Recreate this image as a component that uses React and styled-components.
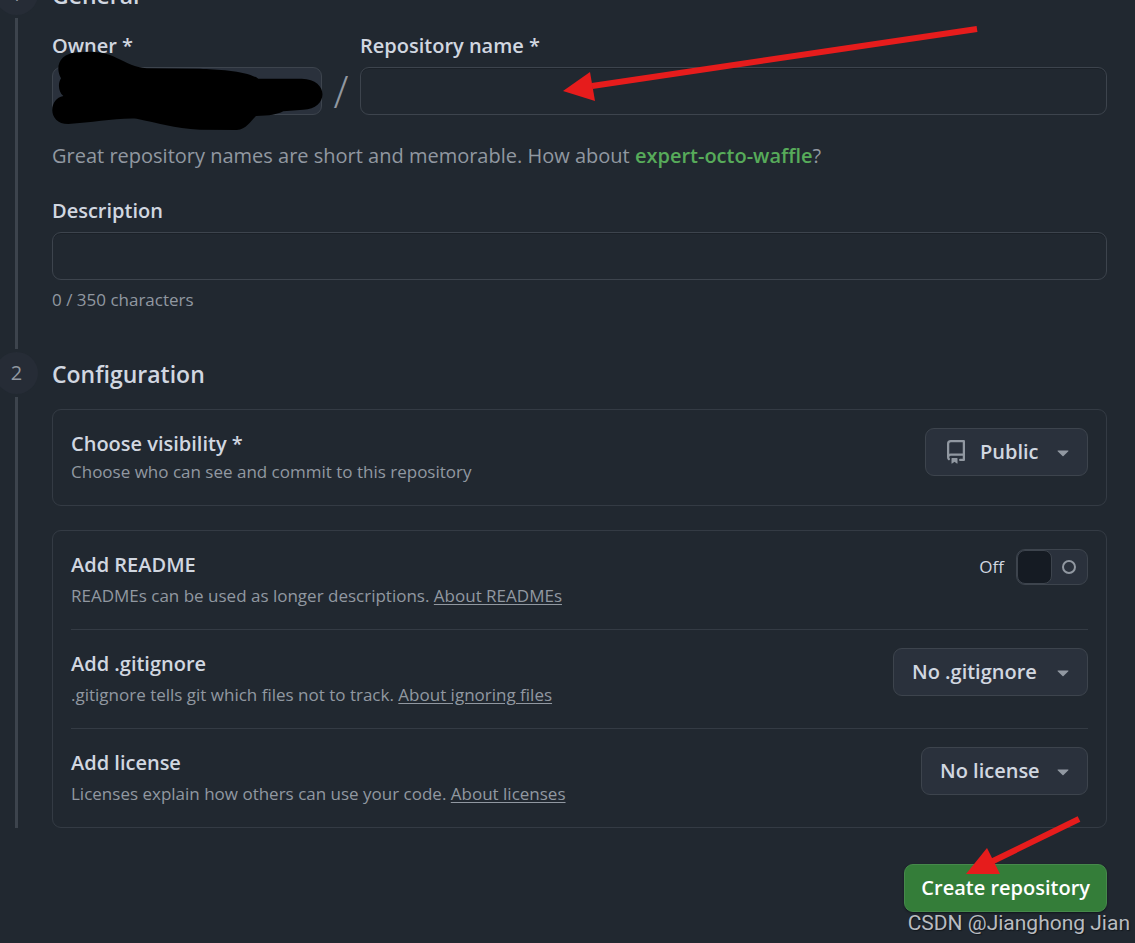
import React, { useState } from 'react';
import styled, { createGlobalStyle } from 'styled-components';

const gitignores = ['No .gitignore', 'Node', 'Python'];
const licenses = ['No license', 'MIT License', 'Apache License 2.0'];

const RepoIcon = () => (
    <Icon viewBox="0 0 16 16" aria-hidden="true">
        <path d="M2 2.5A2.5 2.5 0 0 1 4.5 0h8.75a.75.75 0 0 1 .75.75v12.5a.75.75 0 0 1-.75.75h-2.5a.75.75 0 0 1 0-1.5h1.75v-2h-8a1 1 0 0 0-.714 1.7.75.75 0 1 1-1.072 1.05A2.495 2.495 0 0 1 2 11.5Zm10.5-1h-8a1 1 0 0 0-1 1v6.708A2.486 2.486 0 0 1 4.5 9h8ZM5 12.25a.25.25 0 0 1 .25-.25h3.5a.25.25 0 0 1 .25.25v3.25a.25.25 0 0 1-.4.2l-1.45-1.087a.249.249 0 0 0-.3 0L5.4 15.7a.25.25 0 0 1-.4-.2Z" />
    </Icon>
)

const CaretIcon = () => (
    <Icon viewBox="0 0 16 16" aria-hidden="true">
        <path d="m4.427 7.427 3.396 3.396a.25.25 0 0 0 .354 0l3.396-3.396A.25.25 0 0 0 11.396 7H4.604a.25.25 0 0 0-.177.427Z" />
    </Icon>
)

const Dropdown = ({ label, options, icon, width }) => {
    const [value, setValue] = useState(options[0])
    return <Picker $width={width}>
        {icon}
        <PickerSelect aria-label={label} value={value} onChange={e => setValue(e.target.value)}>
            {options.map(item => <option key={item}>{item}</option>)}
        </PickerSelect>
        <CaretIcon />
    </Picker>
}

const Setting = ({ title, text, link, gap, children }) => (
    <Row>
        <RowText $gap={gap}>
            <RowTitle>{title}</RowTitle>
            <Muted>{text} {link && <MutedLink href="#">{link}</MutedLink>}</Muted>
        </RowText>
        {children}
    </Row>
)

const App = () => {
    const [name, setName] = useState('')
    const [description, setDescription] = useState('')
    const [readme, setReadme] = useState(false)

    return <Page>
        <GlobalStyle />
        <Step>
            <Rail><StepNumber>1</StepNumber><Line /></Rail>
            <StepBody $last={false}>
                <Heading>General</Heading>
                <NameGrid>
                    <Field>
                        <Label htmlFor="owner">Owner *</Label>
                        <OwnerBox>
                            <OwnerSelect id="owner"><option></option></OwnerSelect>
                            <Scribble viewBox="150 150 840 252" aria-hidden="true">
                                <path d="M235 157 C280 152 320 157 350 174 C382 189 405 202 440 205 L600 206 C650 208 740 212 775 236 L905 236 C990 238 985 328 910 329 L850 334 C830 344 810 347 768 348 C750 365 740 388 710 390 L600 389 C520 384 475 369 410 356 C340 354 280 368 205 372 C142 372 145 296 190 288 C175 275 173 250 183 235 C165 203 175 160 235 157 Z" />
                            </Scribble>
                        </OwnerBox>
                    </Field>
                    <Slash>/</Slash>
                    <Field>
                        <Label htmlFor="name">Repository name *</Label>
                        <TextInput id="name" value={name} onChange={e => setName(e.target.value)} />
                    </Field>
                </NameGrid>
                <Hint>
                    Great repository names are short and memorable. How about{' '}
                    <Suggestion type="button" onClick={() => setName('expert-octo-waffle')}>expert-octo-waffle</Suggestion>?
                </Hint>
                <Field>
                    <Label htmlFor="description">Description</Label>
                    <TextInput id="description" maxLength={350} value={description} onChange={e => setDescription(e.target.value)} />
                </Field>
                <Counter>{description.length} / 350 characters</Counter>
            </StepBody>
        </Step>
        <Step>
            <Rail><StepNumber>2</StepNumber><Line /></Rail>
            <StepBody $last>
                <Heading>Configuration</Heading>
                <Card>
                    <Setting title="Choose visibility *" text="Choose who can see and commit to this repository" gap={0}>
                        <Dropdown label="Choose visibility" options={['Public', 'Private']} icon={<RepoIcon />} width={163} />
                    </Setting>
                </Card>
                <Card>
                    <Setting title="Add README" text="READMEs can be used as longer descriptions." link="About READMEs" gap={3}>
                        <SwitchLabel>
                            {readme ? 'On' : 'Off'}
                            <Switch type="checkbox" role="switch" aria-label="Add README" checked={readme} onChange={() => setReadme(!readme)} />
                        </SwitchLabel>
                    </Setting>
                    <Setting title="Add .gitignore" text=".gitignore tells git which files not to track." link="About ignoring files" gap={3}>
                        <Dropdown label="Add .gitignore" options={gitignores} width={195} />
                    </Setting>
                    <Setting title="Add license" text="Licenses explain how others can use your code." link="About licenses" gap={3}>
                        <Dropdown label="Add license" options={licenses} width={167} />
                    </Setting>
                </Card>
            </StepBody>
        </Step>
        <Footer>
            <CreateButton type="button">Create repository</CreateButton>
        </Footer>
        <NameArrow viewBox="0 0 416 76" aria-hidden="true">
            <path d="M29 60 L414 3" stroke="#e61c1c" strokeWidth="6" />
            <path d="M0 65 L27 46 L32 75 Z" fill="#e61c1c" />
        </NameArrow>
        <CreateArrow viewBox="0 0 116 60" aria-hidden="true">
            <path d="M25 46 L113 3" stroke="#e61c1c" strokeWidth="6" />
            <path d="M0 58 L21 32 L34 58 Z" fill="#e61c1c" />
        </CreateArrow>
        <Watermark>CSDN @Jianghong Jian</Watermark>
    </Page>
}

export default App;

const GlobalStyle = createGlobalStyle`
  *, *::before, *::after {
    box-sizing: border-box;
  }
  body {
    margin: 0;
    background: #212830;
    color: #d1d7e0;
    font-family: "Open Sans", "Noto Sans", sans-serif;
    font-size: 20px;
    line-height: 30px;
    overflow: hidden;
  }
  input, select, button {
    font: inherit;
    color: inherit;
  }
`
// the form is scrolled a little past its first heading
const Page = styled.main`
  position: relative;
  margin: -27px 0 0 -5px;
  padding-right: 28px;
`
const Step = styled.section`
  display: grid;
  grid-template-columns: 43px minmax(0, 1fr);
  column-gap: 14px;
`
const Rail = styled.div`
  display: flex;
  flex-direction: column;
  align-items: center;
  gap: 3px;
`
const StepNumber = styled.span`
  width: 43px;
  height: 42px;
  border-radius: 50%;
  background: #262c36;
  color: #9198a1;
  line-height: 42px;
  text-align: center;
`
const Line = styled.div`
  flex: 1;
  width: 3px;
  margin-bottom: 3px;
  background: #3d444d;
  ${Step}:nth-of-type(2) & {
    margin-bottom: 0;
  }
`
const StepBody = styled.div`
  padding-bottom: ${({ $last }) => ($last ? '0' : '39px')};
`
const Heading = styled.h2`
  margin: 0 0 12px;
  font-size: 23px;
  font-weight: 600;
  line-height: 45px;
`
const NameGrid = styled.div`
  display: grid;
  grid-template-columns: 270px 38px minmax(0, 1fr);
  align-items: end;
`
const Field = styled.div`
  display: flex;
  flex-direction: column;
  gap: 5px;
`
const Label = styled.label`
  font-weight: 600;
  line-height: 32px;
`
const OwnerBox = styled.div`
  position: relative;
  height: 48px;
`
const OwnerSelect = styled.select`
  width: 100%;
  height: 48px;
  border: 1px solid #3d444d;
  border-radius: 9px;
  background: #2a313c;
  appearance: none;
`
const Scribble = styled.svg`
  position: absolute;
  left: -2px;
  top: -17px;
  width: 280px;
  height: 84px;
  pointer-events: none;
`
const Slash = styled.span`
  color: #9198a1;
  font-size: 44px;
  font-weight: 300;
  line-height: 48px;
  text-align: center;
`
const TextInput = styled.input`
  width: 100%;
  height: 48px;
  padding: 0 18px;
  border: 1px solid #3d444d;
  border-radius: 9px;
  background: #212830;
  box-shadow: inset 0 1px 0 #1b2128;
`
const Hint = styled.p`
  margin: 26px 0 24px;
  color: #9198a1;
`
const Suggestion = styled.button`
  padding: 0;
  border: 0;
  background: none;
  color: #57ab5a;
  font-weight: 600;
  cursor: pointer;
`
const Muted = styled.span`
  color: #9198a1;
  font-size: 17px;
  line-height: 26px;
`
const Counter = styled(Muted)`
  display: block;
  margin-top: 7px;
`
const MutedLink = styled.a`
  color: inherit;
  text-underline-offset: 2px;
`
const Card = styled.div`
  padding: 0 18px;
  border: 1px solid #343b44;
  border-radius: 9px;
  & + & {
    margin-top: 24px;
  }
`
const Row = styled.div`
  display: flex;
  align-items: flex-start;
  justify-content: space-between;
  padding: 18px 0 20px;
  & + & {
    border-top: 1px solid #343b44;
  }
`
const RowText = styled.div`
  display: flex;
  flex-direction: column;
  gap: ${({ $gap }) => $gap}px;
`
const RowTitle = styled.span`
  font-weight: 600;
  line-height: 31px;
`
const Icon = styled.svg`
  flex: none;
  width: 24px;
  height: 24px;
  fill: #9198a1;
`
const Picker = styled.div`
  display: flex;
  align-items: center;
  gap: 12px;
  width: ${({ $width }) => $width}px;
  height: 48px;
  padding: 0 12px 0 18px;
  border: 1px solid #3d444d;
  border-radius: 9px;
  background: #2a313c;
`
const PickerSelect = styled.select`
  flex: 1;
  min-width: 0;
  padding: 0;
  border: 0;
  background: none;
  font-weight: 600;
  appearance: none;
  outline: none;
`
const SwitchLabel = styled.label`
  display: flex;
  align-items: center;
  gap: 12px;
  font-size: 17px;
`
const Switch = styled.input`
  display: flex;
  align-items: center;
  justify-content: space-between;
  flex-direction: ${({ checked }) => (checked ? 'row-reverse' : 'row')};
  width: 72px;
  height: 36px;
  margin: 0;
  border: 1px solid #3d444d;
  border-radius: 9px;
  background: #2a313c;
  appearance: none;
  &::before {
    content: '';
    flex: none;
    width: 35px;
    height: 34px;
    border: 1px solid #3d444d;
    border-radius: 8px;
    background: #151b23;
  }
  &::after {
    content: '';
    flex: none;
    width: 14px;
    height: 14px;
    margin: 0 11px 0 10px;
    border: 2px solid #9198a1;
    border-radius: 50%;
  }
`
const Footer = styled.div`
  display: flex;
  justify-content: flex-end;
  padding: 36px 0 31px;
`
const CreateButton = styled.button`
  height: 48px;
  padding: 0 16px;
  border: 1px solid #46894b;
  border-radius: 9px;
  background: #347d39;
  box-shadow: 0 1px 2px #10161c;
  color: #fff;
  font-weight: 600;
`
const NameArrow = styled.svg`
  position: absolute;
  left: 568px;
  top: 53px;
  width: 416px;
  height: 76px;
  pointer-events: none;
`
const CreateArrow = styled.svg`
  position: absolute;
  right: 53px;
  bottom: 67px;
  width: 116px;
  height: 60px;
  pointer-events: none;
`
const Watermark = styled.span`
  position: absolute;
  right: 5px;
  bottom: 5px;
  color: #b9bcc0;
  font-family: Roboto, sans-serif;
  font-size: 21px;
  text-shadow: 1px 1px 1px #12171c;
`
